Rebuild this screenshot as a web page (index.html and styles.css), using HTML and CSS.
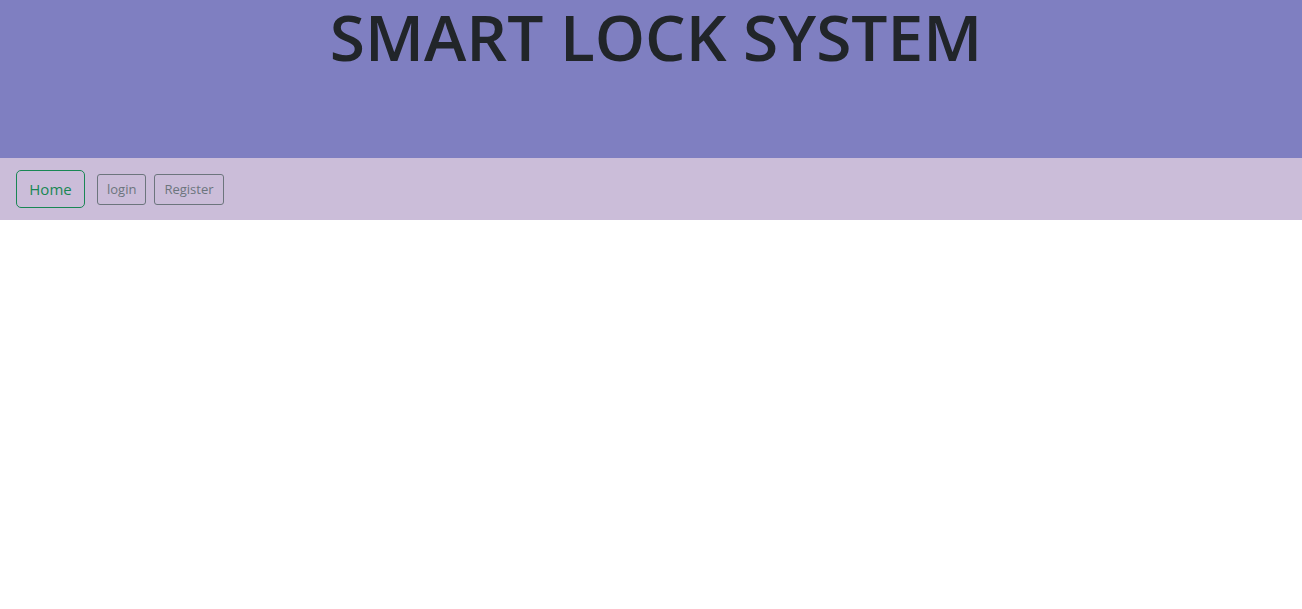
FILE: index.html
```html
<!DOCTYPE html>
<html>
<head>
<meta charset="utf-8">
<link rel="stylesheet" href="styles.css">
</head>
<body>
<header class="header">
  <h1 class="title">SMART LOCK SYSTEM</h1>
</header>
<nav class="nav">
  <a class="btn btn-home" href="#">Home</a>
  <a class="btn btn-sm" href="#">login</a>
  <a class="btn btn-sm" href="#">Register</a>
</nav>
</body>
</html>
```
FILE: styles.css
```css
* { box-sizing: border-box; }
body {
  margin: 0;
  font-family: "Open Sans", "Noto Sans", sans-serif;
  color: #212529;
  background: #fff;
}
.header {
  height: 158px;
  background: #7f7fc1;
  display: flex;
  justify-content: center;
  align-items: flex-start;
  padding-left: 10px;
}
.title {
  margin: 0;
  font-size: 64px;
  font-weight: 600;
  line-height: 74px;
  color: #212529;
  letter-spacing: 0;
}
.nav {
  height: 62px;
  background: #cbbdd9;
  display: flex;
  align-items: center;
  padding: 0 16px;
}
.btn {
  text-decoration: none;
  border-radius: 5px;
  display: inline-flex;
  align-items: center;
  justify-content: center;
}
.btn-home {
  height: 38px;
  width: 69px;
  border: 1px solid #198754;
  color: #198754;
  font-size: 15px;
  margin-right: 12px;
}
.btn-sm {
  height: 31px;
  padding: 0 9px;
  border: 1px solid #6c757d;
  color: #6c757d;
  font-size: 13px;
  border-radius: 3px;
  margin-right: 8px;
}
```
